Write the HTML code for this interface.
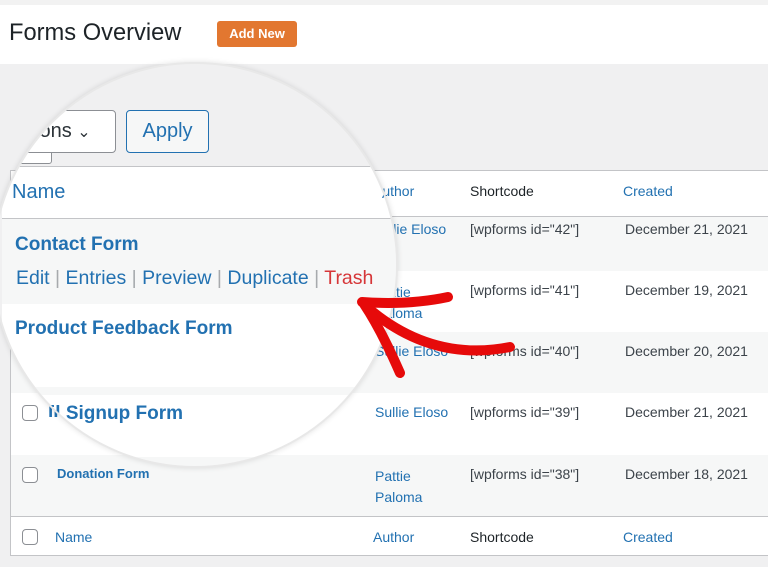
<!DOCTYPE html>
<html style="overflow:hidden"><head><style>
*{margin:0;padding:0;box-sizing:border-box}
body{width:768px;height:567px;overflow:hidden;background:#f0f0f1;font-family:"Liberation Sans",sans-serif;position:relative}
.a{position:absolute;white-space:nowrap}
.blue{color:#2271b1}
.t14{font-size:14px}
.row{position:absolute;left:0;width:758px}
.cb{position:absolute;width:16px;height:16px;border:1px solid #8c8f94;border-radius:4px;background:#fff}
</style></head><body>
<div class="a" style="left:0;top:0;width:768px;height:5px;background:#f2f2f2"></div>
<div class="a" style="left:0;top:5px;width:768px;height:59px;background:#fff"></div>
<div class="a" style="left:9px;top:20px;font-size:23.7px;color:#1d2327">Forms Overview</div>
<div class="a" style="left:217px;top:21px;width:80px;height:26px;background:#e27730;border-radius:3px;color:#fff;font-weight:bold;font-size:13px;line-height:26px;text-align:center">Add New</div>

<div class="row" style="top:170px;height:386px;background:#fff;border:1px solid #c3c4c7;border-right:none;left:10px"></div>
<div class="row" style="top:216px;height:1px;background:#c3c4c7;left:10px"></div>
<div class="row" style="top:217px;height:54px;background:#f6f7f7;left:11px"></div>
<div class="row" style="top:332px;height:61px;background:#f6f7f7;left:11px"></div>
<div class="row" style="top:455px;height:61px;background:#f6f7f7;left:11px"></div>
<div class="row" style="top:516px;height:1px;background:#c3c4c7;left:10px"></div>

<div class="a blue t14" style="left:373px;top:183px">Author</div>
<div class="a t14" style="left:470px;top:183px;color:#1d2327">Shortcode</div>
<div class="a blue t14" style="left:623px;top:183px">Created</div>

<div class="a blue t14" style="left:373px;top:221px">Sullie Eloso</div>
<div class="a t14" style="left:470px;top:221px;color:#3c434a">[wpforms id="42"]</div>
<div class="a t14" style="left:625px;top:221px;color:#3c434a">December 21, 2021</div>

<div class="a blue t14" style="left:375px;top:282px;line-height:21px">Pattie<br>Paloma</div>
<div class="a t14" style="left:470px;top:282px;color:#3c434a">[wpforms id="41"]</div>
<div class="a t14" style="left:625px;top:282px;color:#3c434a">December 19, 2021</div>

<div class="a blue t14" style="left:375px;top:343px">Sullie Eloso</div>
<div class="a t14" style="left:470px;top:343px;color:#3c434a">[wpforms id="40"]</div>
<div class="a t14" style="left:625px;top:343px;color:#3c434a">December 20, 2021</div>

<div class="cb" style="left:22px;top:405px"></div>
<div class="a blue" style="left:48px;top:401px;font-size:19px;font-weight:bold">il Signup Form</div>
<div class="a blue t14" style="left:375px;top:404px">Sullie Eloso</div>
<div class="a t14" style="left:470px;top:404px;color:#3c434a">[wpforms id="39"]</div>
<div class="a t14" style="left:625px;top:404px;color:#3c434a">December 21, 2021</div>

<div class="cb" style="left:22px;top:467px"></div>
<div class="a blue" style="left:57px;top:466px;font-size:13px;font-weight:bold">Donation Form</div>
<div class="a blue t14" style="left:375px;top:466px;line-height:21px">Pattie<br>Paloma</div>
<div class="a t14" style="left:470px;top:466px;color:#3c434a">[wpforms id="38"]</div>
<div class="a t14" style="left:625px;top:466px;color:#3c434a">December 18, 2021</div>

<div class="cb" style="left:22px;top:529px"></div>
<div class="a blue t14" style="left:55px;top:529px">Name</div>
<div class="a blue t14" style="left:373px;top:529px">Author</div>
<div class="a t14" style="left:470px;top:529px;color:#1d2327">Shortcode</div>
<div class="a blue t14" style="left:623px;top:529px">Created</div>

<div class="a" style="left:-8px;top:62px;width:406px;height:406px;border-radius:50%;overflow:hidden;border:2px solid #e8e8e8;box-shadow:0 0 6px rgba(0,0,0,.12);background:#f0f0f1">
 <div style="position:absolute;left:8px;top:-62px;width:768px;height:600px">
  <div class="a" style="left:10px;top:130px;width:40px;height:32px;border:1px solid #8c8f94;border-radius:3px;background:#fff"></div>
  <div class="a" style="left:10px;top:108px;width:104px;height:43px;border:1px solid #8c8f94;border-radius:4px;background:#fff;font-size:20px;color:#2c3338;line-height:41px;padding-left:22px">ions <span style="font-size:16px">&#8964;</span></div>
  <div class="a" style="left:124px;top:108px;width:83px;height:43px;border:1px solid #2271b1;border-radius:4px;background:#f6f7f7;font-size:20px;color:#2271b1;line-height:41px;text-align:center">Apply</div>
  <div class="a" style="left:0;top:164px;width:768px;height:53px;background:#fff;border-top:1px solid #c3c4c7;border-bottom:1px solid #c3c4c7"></div>
  <div class="a blue" style="left:10px;top:179px;font-size:20px">Name</div>
  <div class="a blue" style="left:380px;top:183px;font-size:14px">Author</div>
  <div class="a" style="left:0;top:217px;width:768px;height:85px;background:#f6f7f7"></div>
  <div class="a blue" style="left:13px;top:232px;font-size:19px;font-weight:bold">Contact Form</div>
  <div class="a" style="left:14px;top:265px;font-size:19.5px;color:#a7aaad"><span class="blue">Edit</span> | <span class="blue">Entries</span> | <span class="blue">Preview</span> | <span class="blue">Duplicate</span> | <span style="color:#d63638">Trash</span></div>
  <div class="a" style="left:0;top:302px;width:768px;height:83px;background:#fff"></div>
  <div class="a blue" style="left:13px;top:316px;font-size:19px;font-weight:bold">Product Feedback Form</div>
  <div class="a" style="left:0;top:385px;width:768px;height:8px;background:#f6f7f7"></div>
  <div class="a" style="left:10px;top:393px;width:768px;height:62px;background:#fff;border-left:1px solid #c3c4c7"></div>
  <div class="a" style="left:11px;top:455px;width:768px;height:62px;background:#f6f7f7"></div>
  <div class="cb" style="left:22px;top:405px"></div>
  <div class="a blue" style="left:48px;top:401px;font-size:19px;font-weight:bold">il Signup Form</div>
  <div class="cb" style="left:22px;top:467px"></div>
  <div class="a blue" style="left:57px;top:466px;font-size:13px;font-weight:bold">Donation Form</div>
 </div>
</div>

<svg class="a" style="left:0;top:0" width="768" height="567">
 <g fill="none" stroke="#e60a0a" stroke-width="10" stroke-linecap="round">
  <path d="M510,347 C470,355 420,352 368,308"/>
  <path d="M448,297 C420,303 390,304 362,302"/>
  <path d="M400,373 C390,350 378,325 364,304"/>
 </g>
</svg>
</body></html>
